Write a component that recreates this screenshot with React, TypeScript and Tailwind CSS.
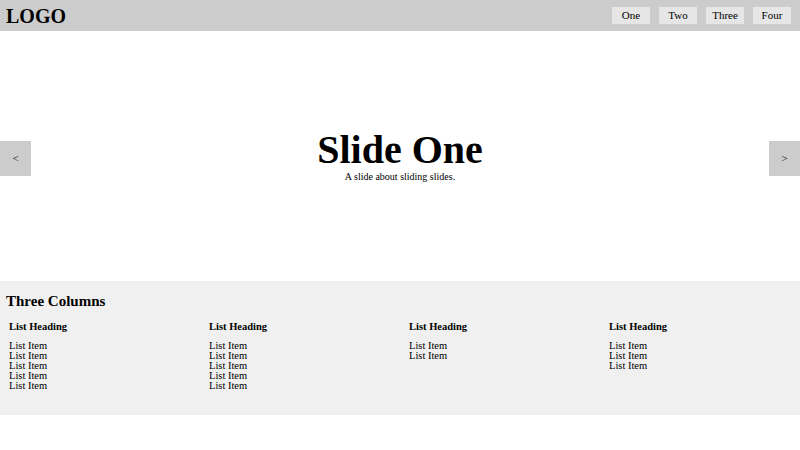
import React from "react";

const cols = [5, 5, 2, 3];

export default function App() {
  return (
    <div className="w-[800px] h-[450px] bg-white text-black" style={{ fontFamily: '"Liberation Serif", serif' }}>
      <header className="h-[31px] bg-[#cccccc] flex items-center justify-between pl-[6px] pr-[9px]">
        <div className="text-[20px] font-bold leading-none">LOGO</div>
        <nav className="flex gap-[9px]">
          {["One", "Two", "Three", "Four"].map((n) => (
            <div key={n} className="w-[38px] h-[17px] bg-[#e6e6e6] text-[11px] flex items-center justify-center">
              {n}
            </div>
          ))}
        </nav>
      </header>
      <section className="h-[250px] flex items-center justify-between">
        <div className="w-[31px] h-[35px] mt-[4px] bg-[#cccccc] text-[11px] flex items-center justify-center">&lt;</div>
        <div className="flex flex-col items-center">
          <h1 className="text-[40px] font-bold leading-[42px]">Slide One</h1>
          <p className="text-[10px] leading-[12px]">A slide about sliding slides.</p>
        </div>
        <div className="w-[31px] h-[35px] mt-[4px] bg-[#cccccc] text-[11px] flex items-center justify-center">&gt;</div>
      </section>
      <section className="h-[134px] bg-[#f0f0f0] pt-[11px]">
        <h2 className="text-[15px] font-bold leading-[18px] px-[6px]">Three Columns</h2>
        <div className="grid grid-cols-[repeat(4,200px)] mt-[11px] pl-[9px]">
          {cols.map((c, i) => (
            <div key={i}>
              <h3 className="text-[10.5px] font-bold leading-[12px]">List Heading</h3>
              <ul className="mt-[8px] text-[10.5px] leading-[10px]">
                {Array.from({ length: c }).map((_, j) => (
                  <li key={j}>List Item</li>
                ))}
              </ul>
            </div>
          ))}
        </div>
      </section>
    </div>
  );
}
